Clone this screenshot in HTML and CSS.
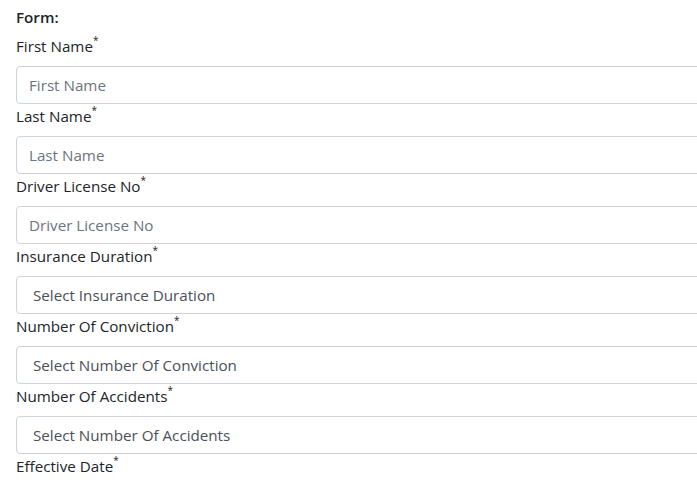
FILE: index.html
```html
<!DOCTYPE html>
<html>
<head>
<meta charset="utf-8">
<link rel="stylesheet" href="styles.css">
</head>
<body>
<div class="page">
  <div class="form-title">Form:</div>
  <div class="field">
    <label class="label">First Name<sup>*</sup></label>
    <div class="control"><span class="ph">First Name</span></div>
  </div>
  <div class="field">
    <label class="label">Last Name<sup>*</sup></label>
    <div class="control"><span class="ph">Last Name</span></div>
  </div>
  <div class="field">
    <label class="label">Driver License No<sup>*</sup></label>
    <div class="control"><span class="ph">Driver License No</span></div>
  </div>
  <div class="field">
    <label class="label">Insurance Duration<sup>*</sup></label>
    <div class="control select"><span class="val">Select Insurance Duration</span></div>
  </div>
  <div class="field">
    <label class="label">Number Of Conviction<sup>*</sup></label>
    <div class="control select"><span class="val">Select Number Of Conviction</span></div>
  </div>
  <div class="field">
    <label class="label">Number Of Accidents<sup>*</sup></label>
    <div class="control select"><span class="val">Select Number Of Accidents</span></div>
  </div>
  <div class="field">
    <label class="label">Effective Date<sup>*</sup></label>
  </div>
</div>
</body>
</html>
```
FILE: styles.css
```css
html, body {
  margin: 0;
  padding: 0;
  overflow: hidden;
  background: #fff;
}
body {
  font-family: "Open Sans", "Noto Sans", sans-serif;
  font-size: 15.2px;
  color: #212529;
}
.page {
  width: 800px;
  padding: 5px 0 0 16px;
}
.form-title {
  font-weight: 600;
  line-height: 24px;
  margin-bottom: 5px;
}
.label {
  display: block;
  line-height: 24px;
  margin-bottom: 8px;
}
.label sup {
  font-size: 10px;
  line-height: 0;
  position: relative;
  top: -2px;
  vertical-align: super;
}
.control {
  box-sizing: border-box;
  height: 38px;
  border: 1px solid #ced4da;
  border-radius: 4px;
  display: flex;
  align-items: center;
  padding: 0 12px;
}
.ph {
  color: #6c757d;
}
.select {
  padding-left: 16px;
}
.val {
  color: #495057;
}
```
